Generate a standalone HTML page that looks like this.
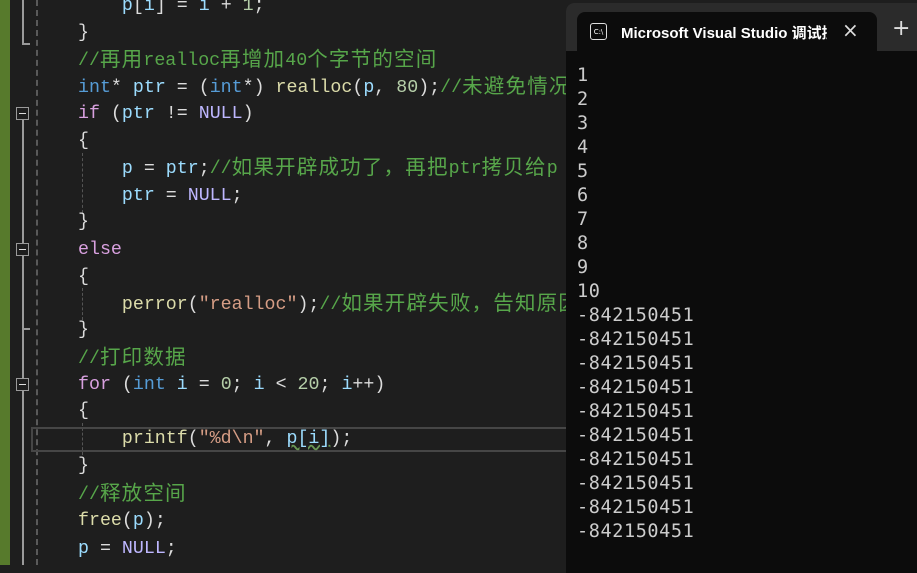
<!DOCTYPE html>
<html><head><meta charset="utf-8"><style>
body{margin:0;width:917px;height:565px;overflow:hidden;background:#1e1e1e;position:relative;font-family:"Liberation Mono","Noto Sans CJK SC",monospace;}
.gb{position:absolute;left:0;top:0;width:10px;height:565px;background:#577a2c;}
.vl{position:absolute;left:22px;width:2px;background:#9a9a9a;}
.dash{position:absolute;left:36px;top:0;height:565px;border-left:2px dashed #5a5a5a;}
.fold{position:absolute;left:16px;width:13px;height:13px;border:1px solid #9a9a9a;background:#1e1e1e;box-sizing:border-box;}
.fold:after{content:"";position:absolute;left:2px;top:5px;width:7px;height:1px;background:#ddd;}
.ln{position:absolute;font-size:18.3px;line-height:27px;height:27px;white-space:pre;color:#dcdcdc;}
.z{font-family:"Noto Sans CJK SC",sans-serif;font-size:20.5px;letter-spacing:1.2px;line-height:1;vertical-align:-1px;}
.k{color:#569cd6}.c{color:#d8a0df}.m{color:#57a64a}.i{color:#9cdcfe}.f{color:#dcdcaa}.n{color:#b5cea8}.s{color:#d69d85}.N{color:#beb7ff}
.cur{position:absolute;left:31px;top:427px;width:540px;height:25px;border:2px solid #464646;box-sizing:border-box;}
.id{position:absolute;border-left:1px dashed #555;}
.con{position:absolute;left:566px;top:3px;width:360px;height:570px;background:#0c0c0c;border-radius:8px 0 0 0;overflow:hidden;}
.bar{position:absolute;left:0;top:0;right:0;height:48px;background:#2b2b2b;}
.tab{position:absolute;left:11px;top:9px;width:300px;height:43px;background:#0c0c0c;border-radius:8px 8px 0 0;}
.out{position:absolute;left:11px;top:61px;font-family:"DejaVu Sans Mono",monospace;font-size:18.5px;line-height:24px;color:#cccccc;white-space:pre;letter-spacing:0.6px;}
</style></head><body>
<div class="gb"></div>
<div class="vl" style="top:0;height:44px"></div><div style="position:absolute;left:22px;top:43px;width:8px;height:2px;background:#9a9a9a"></div>
<div class="vl" style="top:113px;height:452px"></div>
<div style="position:absolute;left:22px;top:328px;width:8px;height:2px;background:#9a9a9a"></div>
<div class="dash"></div>
<div class="fold" style="top:107px"></div>
<div class="fold" style="top:243px"></div>
<div class="fold" style="top:378px"></div>
<div class="id" style="left:82px;top:153px;height:60px"></div>
<div class="id" style="left:82px;top:288px;height:32px"></div>
<div class="id" style="left:82px;top:423px;height:32px"></div>
<div class="cur"></div>
<div class="ln" style="left:78px;top:-7px">    <span class="i">p</span>[<span class="i">i</span>] = <span class="i">i</span> + <span class="n">1</span>;</div>
<div class="ln" style="left:78px;top:20px">}</div>
<div class="ln m" style="left:78px;top:47px">//<span class="z">再用</span>realloc<span class="z">再增加</span>40<span class="z">个字节的空间</span></div>
<div class="ln" style="left:78px;top:74px"><span class="k">int</span>* <span class="i">ptr</span> = (<span class="k">int</span>*) <span class="f">realloc</span>(<span class="i">p</span>, <span class="n">80</span>);<span class="m">//<span class="z">未避免情况</span></span></div>
<div class="ln" style="left:78px;top:101px"><span class="c">if</span> (<span class="i">ptr</span> != <span class="N">NULL</span>)</div>
<div class="ln" style="left:78px;top:128px">{</div>
<div class="ln" style="left:78px;top:155px">    <span class="i">p</span> = <span class="i">ptr</span>;<span class="m">//<span class="z">如果开辟成功了，再把</span>ptr<span class="z">拷贝给</span>p</span></div>
<div class="ln" style="left:78px;top:183px">    <span class="i">ptr</span> = <span class="N">NULL</span>;</div>
<div class="ln" style="left:78px;top:209px">}</div>
<div class="ln c" style="left:78px;top:237px">else</div>
<div class="ln" style="left:78px;top:264px">{</div>
<div class="ln" style="left:78px;top:291px">    <span class="f">perror</span>(<span class="s">"realloc"</span>);<span class="m">//<span class="z">如果开辟失败，告知原因</span></span></div>
<div class="ln" style="left:78px;top:317px">}</div>
<div class="ln m" style="left:78px;top:345px">//<span class="z">打印数据</span></div>
<div class="ln" style="left:78px;top:372px"><span class="c">for</span> (<span class="k">int</span> <span class="i">i</span> = <span class="n">0</span>; <span class="i">i</span> &lt; <span class="n">20</span>; <span class="i">i</span>++)</div>
<div class="ln" style="left:78px;top:398px">{</div>
<div class="ln" style="left:78px;top:426px">    <span class="f">printf</span>(<span class="s">"%d\n"</span>, <span class="i" style="text-decoration:underline wavy #6a9955">p[i]</span>);</div>
<div class="ln" style="left:78px;top:453px">}</div>
<div class="ln m" style="left:78px;top:481px">//<span class="z">释放空间</span></div>
<div class="ln" style="left:78px;top:508px"><span class="f">free</span>(<span class="i">p</span>);</div>
<div class="ln" style="left:78px;top:536px"><span class="i">p</span> = <span class="N">NULL</span>;</div>
<div class="con">
<div class="bar"></div>
<div class="tab">
<div style="position:absolute;left:13px;top:11px;width:15px;height:15px;border:1.5px solid #ddd;border-radius:3px;font:7px 'DejaVu Sans';color:#fff;line-height:17px;text-align:center;">C:\</div>
<div style="position:absolute;left:44px;top:10px;font:bold 15px 'Liberation Sans','Noto Sans CJK SC',sans-serif;color:#fff;white-space:nowrap;width:206px;overflow:hidden;">Microsoft Visual Studio 调试控</div>
<div style="position:absolute;left:265px;top:6px;font:20px 'DejaVu Sans';color:#ddd;">×</div>
</div>
<div style="position:absolute;left:326px;top:13px;font:22px 'DejaVu Sans';color:#ddd;">+</div>
<div class="out">1
2
3
4
5
6
7
8
9
10
-842150451
-842150451
-842150451
-842150451
-842150451
-842150451
-842150451
-842150451
-842150451
-842150451</div>
</div>
</body></html>
